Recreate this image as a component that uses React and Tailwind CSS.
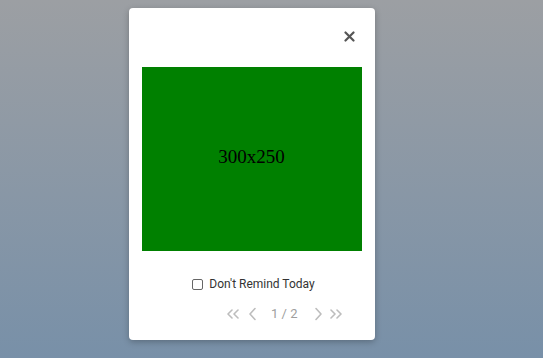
import React, { useState } from 'react';

const Single = ({ dir }) => (
  <svg width="9" height="14" viewBox="0 0 9 14" fill="none">
    <path
      d={dir === 'left' ? 'M7 1.5 L2 7 L7 12.5' : 'M2 1.5 L7 7 L2 12.5'}
      stroke="#bdbdbd"
      strokeWidth="1.6"
      strokeLinecap="round"
      strokeLinejoin="round"
    />
  </svg>
);

const Double = ({ dir }) => (
  <svg width="14" height="10" viewBox="0 0 14 10" fill="none">
    <path
      d={dir === 'left' ? 'M6 1 L2 5 L6 9 M12 1 L8 5 L12 9' : 'M2 1 L6 5 L2 9 M8 1 L12 5 L8 9'}
      stroke="#bdbdbd"
      strokeWidth="1.6"
      strokeLinecap="round"
      strokeLinejoin="round"
    />
  </svg>
);

export default function App() {
  const [checked, setChecked] = useState(false);
  const [page] = useState(1);

  return (
    <div
      className="flex h-[358px] w-full justify-center bg-gradient-to-b from-[#9c9fa3] to-[#7890a8] pr-[40px] pt-[8px]"
      style={{ fontFamily: 'Roboto, "Liberation Sans", sans-serif' }}
    >
      <div className="flex h-[332px] w-[246px] flex-col rounded-[4px] bg-white shadow-[0_2px_6px_rgba(0,0,0,0.25)]">
        {/* close */}
        <div className="flex justify-end pr-[19px] pt-[22px]">
          <button className="flex h-[12px] w-[12px] items-center justify-center">
            <svg width="11" height="11" viewBox="0 0 11 11">
              <path d="M1.5 1.5 L9.5 9.5 M9.5 1.5 L1.5 9.5" stroke="#555" strokeWidth="2.2" strokeLinecap="round" />
            </svg>
          </button>
        </div>

        {/* ad image */}
        <div className="mx-[13px] mt-[25px] flex h-[184px] items-center justify-center bg-[#008000] pb-[4px]">
          <span className="text-[19px] text-black" style={{ fontFamily: '"Liberation Serif", serif' }}>
            300x250
          </span>
        </div>

        {/* don't remind */}
        <label className="mt-[24px] flex cursor-pointer items-center justify-center gap-[6px] pl-[4px] text-[12px] text-[#333]">
          <span
            className={`h-[11px] w-[11px] rounded-[2px] border border-[#666] ${checked ? 'bg-[#666]' : 'bg-white'}`}
            onClick={() => setChecked(!checked)}
          />
          <span>Don't Remind Today</span>
        </label>

        {/* pagination */}
        <div className="mt-[11px] flex items-center justify-end pr-[32px]">
          <Double dir="left" />
          <span className="ml-[8px]">
            <Single dir="left" />
          </span>
          <span className="ml-[14px] text-[13px] text-[#9e9e9e]">{page} / 2</span>
          <span className="ml-[16px]">
            <Single dir="right" />
          </span>
          <span className="ml-[6px]">
            <Double dir="right" />
          </span>
        </div>
      </div>
    </div>
  );
}
